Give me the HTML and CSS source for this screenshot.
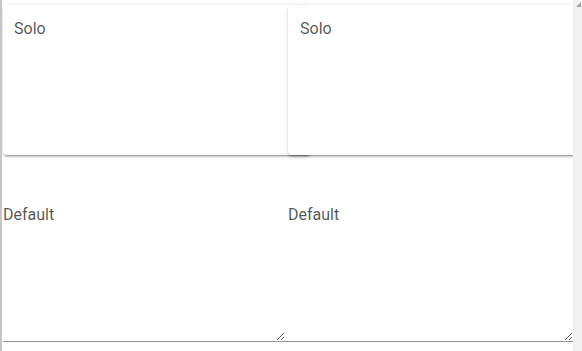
FILE: index.html
```html
<!DOCTYPE html>
<html>
<head>
<meta charset="utf-8">
<link rel="stylesheet" href="styles.css">
</head>
<body>
<div class="frame">
  <main class="content">
    <div class="row solo-row">
      <div class="solo solo-left"><textarea class="field" placeholder="Solo"></textarea></div>
      <div class="solo solo-right"><textarea class="field" placeholder="Solo"></textarea></div>
    </div>
    <div class="row default-row">
      <textarea class="plain" placeholder="Default"></textarea>
      <textarea class="plain" placeholder="Default"></textarea>
    </div>
  </main>
  <div class="scrollbar"><span class="arrow"></span></div>
</div>
</body>
</html>
```
FILE: styles.css
```css
html, body {
  margin: 0;
  padding: 0;
  background: #fff;
  overflow: hidden;
}
body {
  width: 582px;
  height: 351px;
  font-family: Roboto, "Liberation Sans", sans-serif;
}
.frame {
  display: flex;
  height: 351px;
}
.content {
  width: 570px;
  border-left: 2px solid #c6c6c6;
  padding-left: 1px;
  overflow: hidden;
}
.row {
  display: grid;
  grid-template-columns: 282px 285px;
  column-gap: 3px;
}
.solo-row {
  margin-top: 5px;
  height: 150px;
}
.solo {
  background: #fff;
  border-radius: 4px;
  box-shadow: 0 3px 1px -2px rgba(0,0,0,.2), 0 2px 2px 0 rgba(0,0,0,.14), 0 1px 5px 0 rgba(0,0,0,.12);
  height: 150px;
  display: flex;
}
.solo-left {
  width: 308px;
}
.solo-right {
  width: 300px;
  z-index: 1;
}
.field, .plain {
  border: none;
  outline: none;
  background: transparent;
  font-family: Roboto, "Liberation Sans", sans-serif;
  font-size: 16px;
  line-height: 24px;
  color: rgba(0,0,0,.87);
  margin: 0;
  box-sizing: border-box;
}
.field {
  flex: 1;
  resize: none;
  padding: 12px 12px 0 11px;
}
.solo-right .field {
  padding-left: 12px;
}
.field::placeholder, .plain::placeholder {
  color: rgba(0,0,0,.68);
  opacity: 1;
}
.default-row {
  margin-top: 30px;
  border-bottom: 1px solid #949494;
}
.plain {
  display: block;
  width: 100%;
  height: 156px;
  padding: 18px 0 0 0;
  resize: vertical;
}
.scrollbar {
  width: 9px;
  background: #f1f1f1;
  position: relative;
}
.arrow {
  position: absolute;
  top: 2px;
  right: 1px;
  width: 0;
  height: 0;
  border-left: 5px solid transparent;
  border-bottom: 5px solid #a3a3a3;
}
```
